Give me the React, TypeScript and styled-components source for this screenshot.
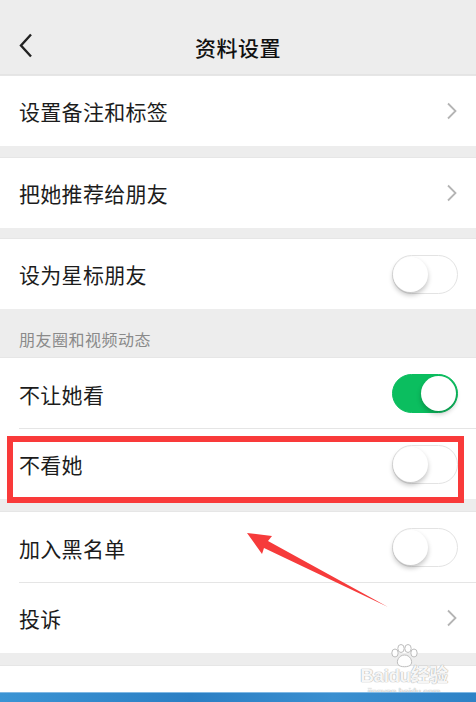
import styled, { createGlobalStyle } from 'styled-components';

const GlobalStyle = createGlobalStyle`
  html, body {
    margin: 0;
    padding: 0;
    background: #ededed;
  }
  * {
    box-sizing: border-box;
  }
`;

const Page = styled.div`
  position: relative;
  width: 476px;
  height: 702px;
  overflow: hidden;
  background: #ededed;
  font-family: "Noto Sans CJK SC", "Noto Sans", sans-serif;
  color: #1a1a1a;
`;

const Header = styled.div`
  height: 75px;
  padding-top: 20px;
  display: flex;
  align-items: center;
  justify-content: center;
  position: relative;
  border-bottom: 1px solid #e4e4e4;
`;

const Title = styled.div`
  font-size: 21px;
  font-weight: 500;
  color: #111;
  letter-spacing: 0.5px;
`;

const BackButton = styled.div`
  position: absolute;
  left: 19px;
  top: 33px;
  width: 14px;
  height: 25px;
  display: flex;
`;

const Group = styled.div<{ $gap?: number }>`
  background: #fff;
  margin-top: ${p => p.$gap ?? 0}px;
  border-top: 1px solid #e6e6e6;
`;

const Row = styled.div<{ $divider?: boolean }>`
  height: ${p => (p.$divider ? 71 : 70)}px;
  display: flex;
  align-items: center;
  justify-content: space-between;
  padding: 0 18px 0 19px;
  position: relative;
  ${p =>
    p.$divider &&
    `
    &::after {
      content: '';
      position: absolute;
      left: 19px;
      right: 0;
      bottom: 0;
      height: 1px;
      background: #e5e5e5;
    }
  `}
`;

const Label = styled.span`
  font-size: 21px;
  color: #1c1c1c;
  letter-spacing: 0.3px;
`;

const SectionTitle = styled.div`
  height: 48px;
  padding: 19px 0 0 19px;
  font-size: 16px;
  line-height: 22px;
  color: #8a8a8a;
  letter-spacing: 0.5px;
`;

const Track = styled.div<{ $on?: boolean }>`
  width: 66px;
  height: 39px;
  border-radius: 20px;
  position: relative;
  background: ${p => (p.$on ? '#0bbe5f' : '#fff')};
  border: 1.5px solid ${p => (p.$on ? '#0bbe5f' : '#e3e3e3')};
`;

const Knob = styled.div<{ $on?: boolean }>`
  position: absolute;
  top: 1px;
  ${p => (p.$on ? 'right: 1px;' : 'left: 0px;')}
  width: 35px;
  height: 35px;
  border-radius: 50%;
  background: #fff;
  box-shadow: 0 3px 5px rgba(0, 0, 0, 0.24);
`;

const Footer = styled.div`
  margin-top: 12px;
  background: #fff;
  height: 60px;
  display: flex;
  justify-content: center;
  padding-top: 23px;
  border-top: 1px solid #e6e6e6;
`;

const DangerText = styled.span`
  font-size: 21px;
  color: #e64340;
`;

const Taskbar = styled.div`
  position: absolute;
  left: 0;
  right: 0;
  bottom: 0;
  height: 10px;
  background: linear-gradient(90deg, #3b94d4 0%, #2b7fc4 40%, #3a8fd0 70%, #2e82c6 100%);
  border-top: 1px solid #7fb8e4;
`;

const Highlight = styled.div`
  position: absolute;
  left: 7px;
  top: 436px;
  width: 457px;
  height: 67px;
  border: 6px solid #f93a3a;
`;

const ArrowLayer = styled.svg`
  position: absolute;
  left: 0;
  top: 0;
  pointer-events: none;
`;

const Watermark = styled.div`
  position: absolute;
  left: 356px;
  top: 644px;
  width: 96px;
  display: flex;
  flex-direction: column;
  align-items: center;
  color: rgba(255, 255, 255, 0.92);
  text-shadow: 0 0 1px #a8a8a8, 0 0 1px #a8a8a8;
  font-family: "Liberation Sans", "Noto Sans CJK SC", sans-serif;
`;

const MarkLogo = styled.div`
  font-size: 19px;
  font-weight: bold;
  line-height: 20px;
  letter-spacing: -0.5px;
  margin-top: -2px;
`;

const MarkUrl = styled.div`
  font-size: 9px;
  line-height: 11px;
  margin-top: 1px;
`;

const Chevron = () => (
  <svg width="12" height="18" viewBox="0 0 12 18">
    <path d="M2 1.5 L9.5 9 L2 16.5" fill="none" stroke="#b4b4b4" strokeWidth="1.8" />
  </svg>
);

const Toggle = ({ on }: { on?: boolean }) => (
  <Track $on={on}>
    <Knob $on={on} />
  </Track>
);

const App = () => {
  return (
    <Page>
      <GlobalStyle />
      <Header>
        <BackButton>
          <svg width="14" height="25" viewBox="0 0 14 25">
            <path d="M12 1.5 L2 12.5 L12 23.5" fill="none" stroke="#222" strokeWidth="2.4" />
          </svg>
        </BackButton>
        <Title>资料设置</Title>
      </Header>

      <Group>
        <Row>
          <Label>设置备注和标签</Label>
          <Chevron />
        </Row>
      </Group>

      <Group $gap={11}>
        <Row>
          <Label>把她推荐给朋友</Label>
          <Chevron />
        </Row>
      </Group>

      <Group $gap={10}>
        <Row>
          <Label>设为星标朋友</Label>
          <Toggle />
        </Row>
      </Group>

      <SectionTitle>朋友圈和视频动态</SectionTitle>

      <Group>
        <Row $divider>
          <Label>不让她看</Label>
          <Toggle on />
        </Row>
        <Row>
          <Label>不看她</Label>
          <Toggle />
        </Row>
      </Group>

      <Group $gap={12}>
        <Row $divider>
          <Label>加入黑名单</Label>
          <Toggle />
        </Row>
        <Row>
          <Label>投诉</Label>
          <Chevron />
        </Row>
      </Group>

      <Footer>
        <DangerText>删除</DangerText>
      </Footer>

      <Highlight />

      <ArrowLayer width="476" height="702" viewBox="0 0 476 702">
        <polygon
          points="247,533 272,536 268,541 388,607 264,548 262,554"
          fill="#f63b3b"
        />
      </ArrowLayer>

      <Watermark>
        <svg width="30" height="24" viewBox="0 0 30 24">
          <g fill="rgba(255,255,255,0.92)" stroke="#bdbdbd" strokeWidth="1">
            <ellipse cx="6" cy="9" rx="3.2" ry="4" />
            <ellipse cx="12" cy="4.5" rx="3.2" ry="4" />
            <ellipse cx="19" cy="4.5" rx="3.2" ry="4" />
            <ellipse cx="25" cy="9" rx="3.2" ry="4" />
            <path d="M15.5 11 C10 11 7 17 9 20.5 C11 23.5 20 23.5 22 20.5 C24 17 21 11 15.5 11 Z" />
          </g>
        </svg>
        <MarkLogo>Baidu经验</MarkLogo>
        <MarkUrl>jingyan.baidu.com</MarkUrl>
      </Watermark>

      <Taskbar />
    </Page>
  );
};

export default App;
